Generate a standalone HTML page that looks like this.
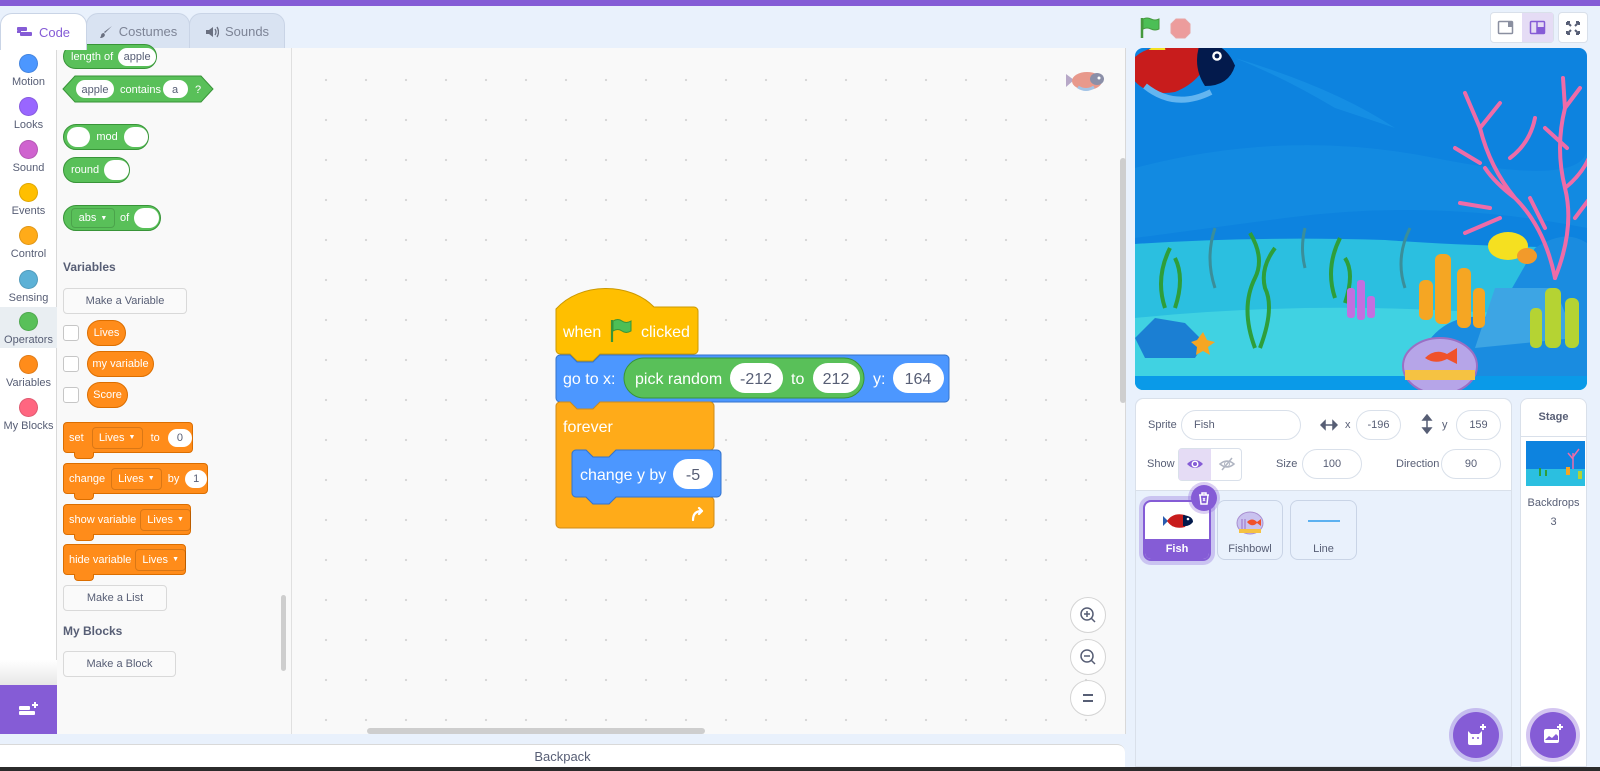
<!DOCTYPE html>
<html><head><meta charset="utf-8">
<style>
*{box-sizing:border-box;margin:0;padding:0}
body{width:1600px;height:771px;overflow:hidden;background:#e9f1fc;font-family:"Liberation Sans",Arial,sans-serif;position:relative;color:#575e75}
.a{position:absolute}
.tab{position:absolute;top:13px;height:36px;border:1px solid #c9d4e6;border-bottom:none;border-radius:12px 12px 0 0;background:#d9e3f2;font-size:13px;color:#7d8496;display:flex;align-items:center;justify-content:center;gap:6px}
.cat{position:absolute;left:0;width:57px;text-align:center;font-size:11px;color:#575e75}
.cat i{display:block;width:19px;height:19px;border-radius:50%;margin:0 auto 3px;border:1px solid rgba(0,0,0,.12)}
.blk{position:absolute;height:26px;border-radius:13px;color:#fff;font-size:11px;display:flex;align-items:center;padding-left:7px;gap:5px;white-space:nowrap}
.g{background:#59c059;border:1px solid #389438}
.o{background:#ff8c1a;border:1px solid #db6e00;border-radius:4px;height:31px}
.in{background:#fff;color:#575e75;border-radius:10px;height:18px;display:inline-flex;align-items:center;justify-content:center;font-size:11px}
.dd{border:1px solid rgba(0,0,0,.15);border-radius:4px;height:22px;display:inline-flex;align-items:center;justify-content:center;color:#fff;font-size:11px;padding:0 6px;gap:4px}
.btn{position:absolute;left:63px;height:26px;border:1px solid #d9d9d9;border-radius:4px;font-size:11px;color:#575e75;display:flex;align-items:center;justify-content:center;background:#fafafa}
.hd{position:absolute;left:63px;font-size:12px;font-weight:bold;color:#575e75}
.cb{position:absolute;left:63px;width:16px;height:16px;border:1px solid #c6c6c6;border-radius:3px;background:#fff}
.tabk{position:absolute;width:20px;height:7px;background:#ff8c1a;border:1px solid #db6e00;border-top:none;border-radius:0 0 4px 4px}
.zb{position:absolute;left:1070px;width:36px;height:36px;border-radius:50%;border:1px solid #d4d4d4;background:#fff;display:flex;align-items:center;justify-content:center}
.lab{position:absolute;font-size:11px;color:#575e75}
.inp{position:absolute;height:30px;border:1px solid #d9e0ea;border-radius:15px;background:#fff;font-size:11px;display:flex;align-items:center;justify-content:center;color:#575e75}
</style></head><body>
<div class="a" style="left:0;top:0;width:1600px;height:6px;background:#855cd6"></div>

<div class="tab" style="left:0;width:87px;background:#fff;color:#855cd6;z-index:2;height:37px">
<svg width="16" height="12" viewBox="0 0 16 12"><rect x="0" y="1" width="10" height="4" rx="1" fill="#855cd6"/><rect x="3" y="6" width="12" height="4" rx="1" fill="#855cd6"/><rect x="0" y="5" width="4" height="2" fill="#855cd6"/></svg>Code</div>
<div class="tab" style="left:86px;width:104px">
<svg width="14" height="14" viewBox="0 0 14 14"><path d="M13 1 L6 8 L5 7 Z" fill="#6a7080"/><path d="M5 8 Q2 8 2 11 L1 13 Q5 13 6 10 Z" fill="#6a7080"/></svg>Costumes</div>
<div class="tab" style="left:189px;width:96px">
<svg width="14" height="12" viewBox="0 0 14 12"><path d="M1 4h3l4-3v10l-4-3H1z" fill="#6a7080"/><path d="M10 3q2 3 0 6M12 1q3 5 0 10" stroke="#6a7080" fill="none" stroke-width="1.3"/></svg>Sounds</div>

<div class="a" style="left:0;top:48px;width:57px;height:638px;background:#fff;border-right:1px solid #d9d9d9"></div>
<div class="a" style="left:0;top:660px;width:57px;height:26px;background:linear-gradient(#fff,#e6e6e6)"></div>
<div class="a" style="left:0;top:307px;width:57px;height:41px;background:#e9eef2"></div>
<div class="cat" style="top:54px"><i style="background:#4c97ff"></i>Motion</div>
<div class="cat" style="top:97px"><i style="background:#9966ff"></i>Looks</div>
<div class="cat" style="top:140px"><i style="background:#cf63cf"></i>Sound</div>
<div class="cat" style="top:183px"><i style="background:#ffbf00"></i>Events</div>
<div class="cat" style="top:226px"><i style="background:#ffab19"></i>Control</div>
<div class="cat" style="top:270px"><i style="background:#5cb1d6"></i>Sensing</div>
<div class="cat" style="top:312px"><i style="background:#59c059"></i>Operators</div>
<div class="cat" style="top:355px"><i style="background:#ff8c1a"></i>Variables</div>
<div class="cat" style="top:398px"><i style="background:#ff6680"></i>My Blocks</div>
<div class="a" style="left:0;top:685px;width:57px;height:49px;background:#855cd6;display:flex;align-items:center;justify-content:center">
<svg width="22" height="16" viewBox="0 0 22 16"><rect x="1" y="4" width="11" height="4" rx="1" fill="#fff"/><rect x="1" y="9" width="16" height="4" rx="1" fill="#fff"/><path d="M17 0v6M14 3h6" stroke="#fff" stroke-width="2"/></svg></div>

<div class="a" style="left:57px;top:48px;width:235px;height:686px;background:#f9f9f9;border-right:1px solid #e0e0e0"></div>
<div class="a" style="left:281px;top:595px;width:5px;height:76px;border-radius:3px;background:#cecece"></div>

<div class="blk g" style="left:63px;top:44px;width:94px;height:25px">length of <span class="in" style="width:39px">apple</span></div>
<svg class="a" style="left:62px;top:75px" width="152" height="28"><path d="M1 14 L13 1 H139 L151 14 L139 27 H13 Z" fill="#59c059" stroke="#389438"/><rect x="14" y="5" width="38" height="18" rx="9" fill="#fff"/><text x="33" y="18" font-size="11" fill="#575e75" text-anchor="middle" font-family="Liberation Sans">apple</text><text x="58" y="18" font-size="11" fill="#fff" font-family="Liberation Sans">contains</text><rect x="101" y="5" width="25" height="18" rx="9" fill="#fff"/><text x="113" y="18" font-size="11" fill="#575e75" text-anchor="middle" font-family="Liberation Sans">a</text><text x="133" y="18" font-size="11" fill="#fff" font-family="Liberation Sans">?</text></svg>
<div class="blk g" style="left:63px;top:124px;width:86px;padding-left:3px;gap:6px"><span class="in" style="width:24px;height:20px"></span>mod<span class="in" style="width:25px;height:20px"></span></div>
<div class="blk g" style="left:63px;top:157px;width:67px">round <span class="in" style="width:25px;height:20px"></span></div>
<div class="blk g" style="left:63px;top:205px;width:98px;padding-left:7px"><span class="dd" style="width:44px;height:20px">abs <span style="font-size:7px">▼</span></span>of <span class="in" style="width:25px;height:20px"></span></div>

<div class="hd" style="top:260px">Variables</div>
<div class="btn" style="top:288px;width:124px">Make a Variable</div>
<div class="cb" style="top:325px"></div><div class="cb" style="top:356px"></div><div class="cb" style="top:387px"></div>
<div class="blk" style="left:87px;top:320px;width:39px;background:#ff8c1a;border:1px solid #db6e00;justify-content:center;padding:0">Lives</div>
<div class="blk" style="left:87px;top:351px;width:67px;background:#ff8c1a;border:1px solid #db6e00;justify-content:center;padding:0">my variable</div>
<div class="blk" style="left:87px;top:382px;width:41px;background:#ff8c1a;border:1px solid #db6e00;justify-content:center;padding:0">Score</div>

<div class="blk o" style="left:63px;top:422px;width:130px;padding-left:5px;gap:8px">set <span class="dd" style="width:52px">Lives <span style="font-size:7px">▼</span></span>to <span class="in" style="width:25px">0</span></div>
<div class="tabk" style="left:74px;top:452px"></div>
<div class="blk o" style="left:63px;top:463px;width:145px;padding-left:5px;gap:6px">change <span class="dd" style="width:52px">Lives <span style="font-size:7px">▼</span></span>by <span class="in" style="width:25px">1</span></div>
<div class="tabk" style="left:74px;top:493px"></div>
<div class="blk o" style="left:63px;top:504px;width:128px;padding-left:5px;gap:4px">show variable <span class="dd" style="width:52px">Lives <span style="font-size:7px">▼</span></span></div>
<div class="tabk" style="left:74px;top:534px"></div>
<div class="blk o" style="left:63px;top:544px;width:123px;padding-left:5px;gap:4px">hide variable <span class="dd" style="width:52px">Lives <span style="font-size:7px">▼</span></span></div>
<div class="tabk" style="left:74px;top:574px"></div>
<div class="btn" style="top:585px;width:104px">Make a List</div>
<div class="hd" style="top:624px">My Blocks</div>
<div class="btn" style="top:651px;width:113px">Make a Block</div>

<div class="a" style="left:292px;top:48px;width:834px;height:686px;background-color:#f9f9f9;background-image:radial-gradient(circle,#d6d6d6 1px,transparent 1.3px);background-size:40px 40px;background-position:14px 12px;border-right:1px solid #d9d9d9"></div>
<div class="a" style="left:367px;top:728px;width:338px;height:6px;border-radius:3px;background:#cecece"></div>
<div class="a" style="left:1120px;top:158px;width:6px;height:245px;border-radius:3px;background:#cecece"></div>
<svg class="a" style="left:1064px;top:68px" width="46" height="26" viewBox="0 0 46 26"><path d="M2 6 L10 12 L2 19 Z" fill="#b7a8c7"/><ellipse cx="23" cy="13" rx="15" ry="9" fill="#e8998c"/><ellipse cx="33" cy="11" rx="7" ry="6" fill="#8b8fa8"/><circle cx="35" cy="10" r="1.5" fill="#fff"/><path d="M14 19 q8 5 16 0" stroke="#a3c4e6" stroke-width="3" fill="none"/></svg>

<svg class="a" style="left:0;top:0" width="1000" height="560" font-family="Liberation Sans">
<path d="M556,309 C580,282 630,282 654,307 H694 a4,4 0 0 1 4,4 V350 a4,4 0 0 1 -4,4 H600 l-7,7 h-16 l-7,-7 H560 a4,4 0 0 1 -4,-4 Z" fill="#ffbf00" stroke="#cc9900"/>
<text x="563" y="337" font-size="16" fill="#fff">when</text>
<path d="M612 320 v22" stroke="#389438" stroke-width="2.2"/><path d="M613 321 q5 -3 9 0 t9 0 v10 q-5 3 -9 0 t-9 0 z" fill="#4cbf56" stroke="#389438"/>
<text x="641" y="337" font-size="16" fill="#fff">clicked</text>
<path d="M556,359 a4,4 0 0 1 4,-4 H570 l7,7 h16 l7,-7 H945 a4,4 0 0 1 4,4 V398 a4,4 0 0 1 -4,4 H600 l-7,7 h-16 l-7,-7 H560 a4,4 0 0 1 -4,-4 Z" fill="#4c97ff" stroke="#3373cc"/>
<text x="563" y="384" font-size="16" fill="#fff">go to x:</text>
<rect x="624" y="358" width="240" height="40" rx="20" fill="#59c059" stroke="#389438"/>
<text x="635" y="384" font-size="16" fill="#fff">pick random</text>
<rect x="730" y="363" width="53" height="30" rx="15" fill="#fff"/><text x="756" y="384" font-size="16" fill="#575e75" text-anchor="middle">-212</text>
<text x="791" y="384" font-size="16" fill="#fff">to</text>
<rect x="813" y="363" width="47" height="30" rx="15" fill="#fff"/><text x="836" y="384" font-size="16" fill="#575e75" text-anchor="middle">212</text>
<text x="873" y="384" font-size="16" fill="#fff">y:</text>
<rect x="893" y="363" width="51" height="30" rx="15" fill="#fff"/><text x="918" y="384" font-size="16" fill="#575e75" text-anchor="middle">164</text>
<path d="M556,406 a4,4 0 0 1 4,-4 H570 l7,7 h16 l7,-7 H710 a4,4 0 0 1 4,4 V446 a4,4 0 0 1 -4,4 H616 l-7,7 h-16 l-7,-7 H576 a4,4 0 0 0 -4,4 V493 a4,4 0 0 0 4,4 H586 l7,7 h16 l7,-7 H710 a4,4 0 0 1 4,4 V524 a4,4 0 0 1 -4,4 H560 a4,4 0 0 1 -4,-4 Z" fill="#ffab19" stroke="#cf8b17"/>
<text x="563" y="432" font-size="16" fill="#fff">forever</text>
<path d="M693 520 q0 -9 9 -9 M702 511 l-3 -3 M702 511 l-3 3" stroke="#fff" stroke-width="2.2" fill="none" stroke-linecap="round"/>
<path d="M572,454 a4,4 0 0 1 4,-4 H586 l7,7 h16 l7,-7 H717 a4,4 0 0 1 4,4 V493 a4,4 0 0 1 -4,4 H616 l-7,7 h-16 l-7,-7 H576 a4,4 0 0 1 -4,-4 Z" fill="#4c97ff" stroke="#3373cc"/>
<text x="580" y="480" font-size="16" fill="#fff">change y by</text>
<rect x="673" y="459" width="40" height="30" rx="15" fill="#fff"/><text x="693" y="480" font-size="16" fill="#575e75" text-anchor="middle">-5</text>
</svg>

<div class="zb" style="top:597px"><svg width="18" height="18" viewBox="0 0 18 18"><circle cx="8" cy="8" r="6" stroke="#575e75" stroke-width="1.5" fill="none"/><path d="M12 12l4 4M5 8h6M8 5v6" stroke="#575e75" stroke-width="1.5"/></svg></div>
<div class="zb" style="top:639px"><svg width="18" height="18" viewBox="0 0 18 18"><circle cx="8" cy="8" r="6" stroke="#575e75" stroke-width="1.5" fill="none"/><path d="M12 12l4 4M5 8h6" stroke="#575e75" stroke-width="1.5"/></svg></div>
<div class="zb" style="top:680px"><svg width="14" height="10" viewBox="0 0 14 10"><path d="M2 2h10M2 8h10" stroke="#575e75" stroke-width="2"/></svg></div>

<div class="a" style="left:0;top:744px;width:1125px;height:23px;background:#fff;border-top:1px solid #d9d9d9;border-radius:0 8px 0 0;font-size:13px;display:flex;align-items:center;justify-content:center">Backpack</div>

<svg class="a" style="left:1139px;top:16px" width="22" height="24" viewBox="0 0 22 24"><path d="M3 2v20" stroke="#45993d" stroke-width="2.5"/><path d="M4 3 q4 -2 8 0 t8 0 v10 q-4 2 -8 0 t-8 0 z" fill="#4cbf56" stroke="#45993d"/></svg>
<svg class="a" style="left:1170px;top:18px" width="21" height="21" viewBox="0 0 21 21"><path d="M6 1h9l5 5v9l-5 5H6l-5-5V6z" fill="#ec9c9c" stroke="#e8a5a5"/></svg>
<div class="a" style="left:1490px;top:12px;width:64px;height:31px;border:1px solid #d9e0ea;border-radius:4px;background:#fff"></div>
<div class="a" style="left:1522px;top:13px;width:31px;height:29px;background:#e5dcf5"></div>
<svg class="a" style="left:1497px;top:19px" width="18" height="18" viewBox="0 0 18 18"><rect x="1.5" y="2.5" width="14" height="12" rx="1" fill="none" stroke="#8a8fa0" stroke-width="1.5"/><rect x="11" y="3" width="4" height="5" fill="#8a8fa0"/></svg>
<svg class="a" style="left:1529px;top:19px" width="18" height="18" viewBox="0 0 18 18"><rect x="1.5" y="2.5" width="14" height="12" rx="1" fill="none" stroke="#855cd6" stroke-width="1.5"/><rect x="8" y="8" width="7" height="6" fill="#855cd6"/><path d="M8 3v12" stroke="#855cd6" stroke-width="1.5"/></svg>
<div class="a" style="left:1558px;top:12px;width:30px;height:31px;border:1px solid #d9e0ea;border-radius:4px;background:#fff"></div>
<svg class="a" style="left:1565px;top:20px" width="16" height="16" viewBox="0 0 16 16"><path d="M2 2l4 4M2 2v3M2 2h3M14 2l-4 4M14 2v3M14 2h-3M2 14l4-4M2 14v-3M2 14h3M14 14l-4-4M14 14v-3M14 14h-3" stroke="#575e75" stroke-width="2"/></svg>

<svg class="a" style="left:1135px;top:48px" width="452" height="342" viewBox="0 0 452 342">
<defs><clipPath id="c"><rect width="452" height="342" rx="8"/></clipPath></defs>
<g clip-path="url(#c)">
<rect width="452" height="342" fill="#0d83df"/>
<path d="M0 120 Q150 80 300 110 T452 100 V180 Q300 150 150 170 T0 190Z" fill="#1590e3" opacity=".6"/>
<path d="M100 10 Q200 40 260 80 L200 60 Q150 30 100 10Z" fill="#1a93e6" opacity=".7"/>
<path d="M0 196 Q120 188 250 192 Q330 198 452 200 V342 H0Z" fill="#2bbfe0"/>
<path d="M0 270 Q150 255 300 262 T452 265 V342 H0Z" fill="#40d2e2"/>
<rect y="328" width="452" height="14" fill="#0a9ae8"/>
<path d="M280 320 Q300 260 360 270 L400 200 Q430 180 452 195 V328 H270Z" fill="#1a8ce0"/>
<path d="M340 300 l20 -60 h60 l20 50 z" fill="#3da5e4"/>
<path d="M0 290 l20 -20 l30 5 l20 20 l-10 15 h-50z" fill="#1b7fd3"/>
<g stroke="#ee6ca8" stroke-width="4" fill="none" stroke-linecap="round">
<path d="M420 230 Q410 180 380 150 Q355 120 345 80 L330 45 M380 150 Q360 135 350 120 M345 80 L365 55 M375 110 Q395 95 400 70 M320 100 L345 115 M325 155 L355 160 M330 185 L365 170"/>
<path d="M420 230 Q440 180 430 140 Q420 100 430 60 L428 30 M430 140 Q455 120 460 90 M430 60 L445 40 M432 100 L410 80 M410 180 L395 150 M440 170 L455 150"/>
</g>
<ellipse cx="373" cy="198" rx="20" ry="14" fill="#f5e020"/><ellipse cx="392" cy="208" rx="10" ry="8" fill="#f29a2b"/>
<g fill="#f5a623"><rect x="300" y="206" width="16" height="70" rx="6"/><rect x="284" y="232" width="14" height="40" rx="6"/><rect x="322" y="220" width="14" height="60" rx="6"/><rect x="338" y="240" width="12" height="40" rx="5"/></g>
<g fill="#b5d333"><rect x="410" y="240" width="16" height="60" rx="6"/><rect x="395" y="260" width="12" height="40" rx="5"/><rect x="430" y="250" width="14" height="50" rx="6"/></g>
<g stroke="#2e9e3a" stroke-width="4" fill="none"><path d="M120 300 Q105 260 120 230 Q130 210 115 185"/><path d="M125 300 Q140 260 130 240 Q125 220 140 200"/><path d="M30 260 Q20 230 35 200"/><path d="M40 260 Q50 230 40 210"/><path d="M200 250 Q190 220 205 190"/><path d="M210 255 Q220 225 210 210"/></g>
<g stroke="#3a8e9a" stroke-width="3" fill="none"><path d="M80 240 Q70 210 80 180"/><path d="M270 240 Q260 210 275 180"/><path d="M170 220 Q165 200 170 180"/></g>
<g fill="#c36fe0"><rect x="212" y="240" width="8" height="30" rx="3"/><rect x="222" y="232" width="8" height="40" rx="3"/><rect x="232" y="248" width="8" height="22" rx="3"/></g>
<path d="M62 292 l6 -8 l4 8 l8 2 l-7 5 l2 8 l-7 -4 l-7 4 l1 -8 l-6 -5z" fill="#f5a623"/>
<ellipse cx="305" cy="318" rx="37" ry="28" fill="#b6a5e8" stroke="#9a6fc4" stroke-width="2"/>
<rect x="270" y="322" width="70" height="10" fill="#f5c242"/>
<path d="M290 310 q10 -10 22 -4 l10 -6 v16 l-10 -5 q-12 6 -22 -1z" fill="#f0522a"/>
<g transform="translate(-8,-4) scale(1.2)"><path d="M0 20 Q10 -2 50 2 L70 5 Q65 30 40 40 Q10 45 0 20Z" fill="#c81c1c"/><path d="M60 2 Q80 -5 90 18 Q85 35 65 35 Q55 20 60 2Z" fill="#031a4c"/><circle cx="75" cy="10" r="4" fill="#fff"/><circle cx="75" cy="10" r="2" fill="#031a4c"/><path d="M15 35 Q40 55 70 40" stroke="#63b5f0" stroke-width="5" fill="none"/><path d="M18 5 L30 -5 L32 5 Z" fill="#f5e020"/></g>
</g></svg>

<div class="a" style="left:1135px;top:398px;width:377px;height:369px;background:#e9f1fc;border:1px solid #d9e0ea;border-radius:8px 8px 0 0"></div>
<div class="a" style="left:1136px;top:399px;width:375px;height:92px;background:#fff;border-bottom:1px solid #d9e0ea;border-radius:8px 8px 0 0"></div>
<div class="lab" style="left:1148px;top:419px">Sprite</div>
<div class="inp" style="left:1181px;top:410px;width:120px;justify-content:flex-start;padding-left:12px">Fish</div>
<svg class="a" style="left:1320px;top:419px" width="18" height="12"><path d="M3 6h12M1 6l4-4v8zM17 6l-4-4v8z" fill="#575e75" stroke="#575e75" stroke-width="1.5"/></svg>
<div class="lab" style="left:1345px;top:419px">x</div>
<div class="inp" style="left:1356px;top:410px;width:45px">-196</div>
<svg class="a" style="left:1421px;top:414px" width="12" height="20"><path d="M6 3v14M6 1l-4 5h8zM6 19l-4-5h8z" fill="#575e75" stroke="#575e75" stroke-width="1.5"/></svg>
<div class="lab" style="left:1442px;top:419px">y</div>
<div class="inp" style="left:1456px;top:410px;width:45px">159</div>
<div class="lab" style="left:1147px;top:458px">Show</div>
<div class="a" style="left:1178px;top:448px;width:64px;height:33px;border:1px solid #d9e0ea;border-radius:4px;background:#fff"></div>
<div class="a" style="left:1179px;top:449px;width:32px;height:31px;background:#e5dcf5"></div>
<svg class="a" style="left:1186px;top:455px" width="18" height="18"><path d="M1 9 Q9 1 17 9 Q9 17 1 9Z" fill="#855cd6"/><circle cx="9" cy="9" r="3.5" fill="#fff"/><circle cx="9" cy="9" r="2" fill="#855cd6"/></svg>
<svg class="a" style="left:1218px;top:455px" width="18" height="18"><path d="M2 9 Q9 3 16 9 Q9 15 2 9Z" fill="none" stroke="#b0b5c2" stroke-width="1.5"/><circle cx="9" cy="9" r="2.5" fill="none" stroke="#b0b5c2"/><path d="M4 15L14 3" stroke="#b0b5c2" stroke-width="1.5"/></svg>
<div class="lab" style="left:1276px;top:458px">Size</div>
<div class="inp" style="left:1302px;top:449px;width:60px">100</div>
<div class="lab" style="left:1396px;top:458px">Direction</div>
<div class="inp" style="left:1441px;top:449px;width:60px">90</div>

<div class="a" style="left:1143px;top:500px;width:68px;height:61px;border-radius:8px;border:2px solid #855cd6;box-shadow:0 0 0 4px rgba(133,92,214,.3);background:#fff;overflow:hidden">
<div class="a" style="left:0;bottom:0;width:100%;height:20px;background:#855cd6;color:#fff;font-size:11px;font-weight:bold;text-align:center;line-height:20px">Fish</div>
<svg class="a" style="left:18px;top:10px" width="32" height="18" viewBox="0 0 32 18"><path d="M0 4 l5 5 l-5 5z" fill="#2a5cb0"/><path d="M4 9 Q10 0 22 3 Q26 9 22 15 Q10 18 4 9Z" fill="#c81c1c"/><path d="M20 3 Q30 4 30 10 Q26 15 20 14Z" fill="#031a4c"/><circle cx="25" cy="7" r="1.3" fill="#fff"/></svg></div>
<div class="a" style="left:1191px;top:485px;width:26px;height:26px;border-radius:50%;background:#855cd6;box-shadow:0 0 0 3px rgba(133,92,214,.3);display:flex;align-items:center;justify-content:center">
<svg width="12" height="13" viewBox="0 0 12 13"><path d="M1 3h10M4 3V1h4v2M2 3l1 9h6l1-9z" fill="none" stroke="#fff" stroke-width="1.5"/><path d="M5 6l2 3M7 6l-2 3" stroke="#fff"/></svg></div>
<div class="a" style="left:1217px;top:500px;width:66px;height:60px;border-radius:8px;border:1px solid #c9d4e6;background:#e9f1fc;font-size:11px;text-align:center;padding-top:42px">Fishbowl</div>
<svg class="a" style="left:1235px;top:507px" width="30" height="28" viewBox="0 0 30 28"><ellipse cx="15" cy="16" rx="13" ry="11" fill="#c9c2ef" stroke="#a98fd0"/><rect x="4" y="22" width="22" height="4" fill="#f5c242"/><path d="M12 15 q5 -5 10 0 l4 -3v7l-4-3q-5 5-10-1z" fill="#f0522a"/><path d="M7 12v10M10 12v10" stroke="#9a6fc4"/></svg>
<div class="a" style="left:1290px;top:500px;width:67px;height:60px;border-radius:8px;border:1px solid #c9d4e6;background:#e9f1fc;font-size:11px;text-align:center;padding-top:42px">Line</div>
<div class="a" style="left:1308px;top:520px;width:32px;height:2px;background:#5cb1f0"></div>

<div class="a" style="left:1520px;top:398px;width:67px;height:369px;background:#fff;border:1px solid #d9e0ea;border-radius:8px 8px 0 0"></div>
<div class="a" style="left:1520px;top:436px;width:67px;height:1px;background:#d9e0ea"></div>
<div class="lab" style="left:1520px;top:411px;width:67px;text-align:center;font-weight:bold;font-size:11px">Stage</div>
<svg class="a" style="left:1526px;top:441px" width="59" height="45" viewBox="0 0 59 45"><rect width="59" height="45" fill="#0d83df"/><rect y="28" width="59" height="17" fill="#2bbfe0"/><path d="M47 28 V12 M47 18 l-5 -6 M47 16 l6 -8" stroke="#ee6ca8" stroke-width="1.5"/><path d="M14 35 v-8 M20 35 v-6" stroke="#2e9e3a" stroke-width="2"/><rect x="40" y="26" width="4" height="8" fill="#f5a623"/><rect x="52" y="30" width="4" height="8" fill="#b5d333"/></svg>
<div class="lab" style="left:1520px;top:497px;width:67px;text-align:center">Backdrops</div>
<div class="lab" style="left:1520px;top:516px;width:67px;text-align:center">3</div>

<div class="a" style="left:1453px;top:712px;width:46px;height:46px;border-radius:50%;background:#855cd6;box-shadow:0 0 0 4px rgba(133,92,214,.35);display:flex;align-items:center;justify-content:center">
<svg width="24" height="24" viewBox="0 0 24 24"><path d="M4 8 l3 3 h8 l3 -3 v12 q0 2 -2 2 h-10 q-2 0 -2 -2z" fill="#fff"/><circle cx="9" cy="15" r="1" fill="#855cd6"/><circle cx="14" cy="15" r="1" fill="#855cd6"/><path d="M19 1v6M16 4h6" stroke="#fff" stroke-width="2"/></svg></div>
<div class="a" style="left:1530px;top:712px;width:46px;height:46px;border-radius:50%;background:#855cd6;box-shadow:0 0 0 4px rgba(133,92,214,.35);display:flex;align-items:center;justify-content:center">
<svg width="24" height="24" viewBox="0 0 24 24"><rect x="3" y="6" width="15" height="14" rx="2" fill="#fff"/><path d="M4 17 l4 -4 l3 2 l4 -4 l2 2 v4z" fill="#855cd6"/><path d="M19 1v6M16 4h6" stroke="#fff" stroke-width="2"/></svg></div>

<div class="a" style="left:0;top:767px;width:1600px;height:4px;background:#2b2b2b"></div>
</body></html>
